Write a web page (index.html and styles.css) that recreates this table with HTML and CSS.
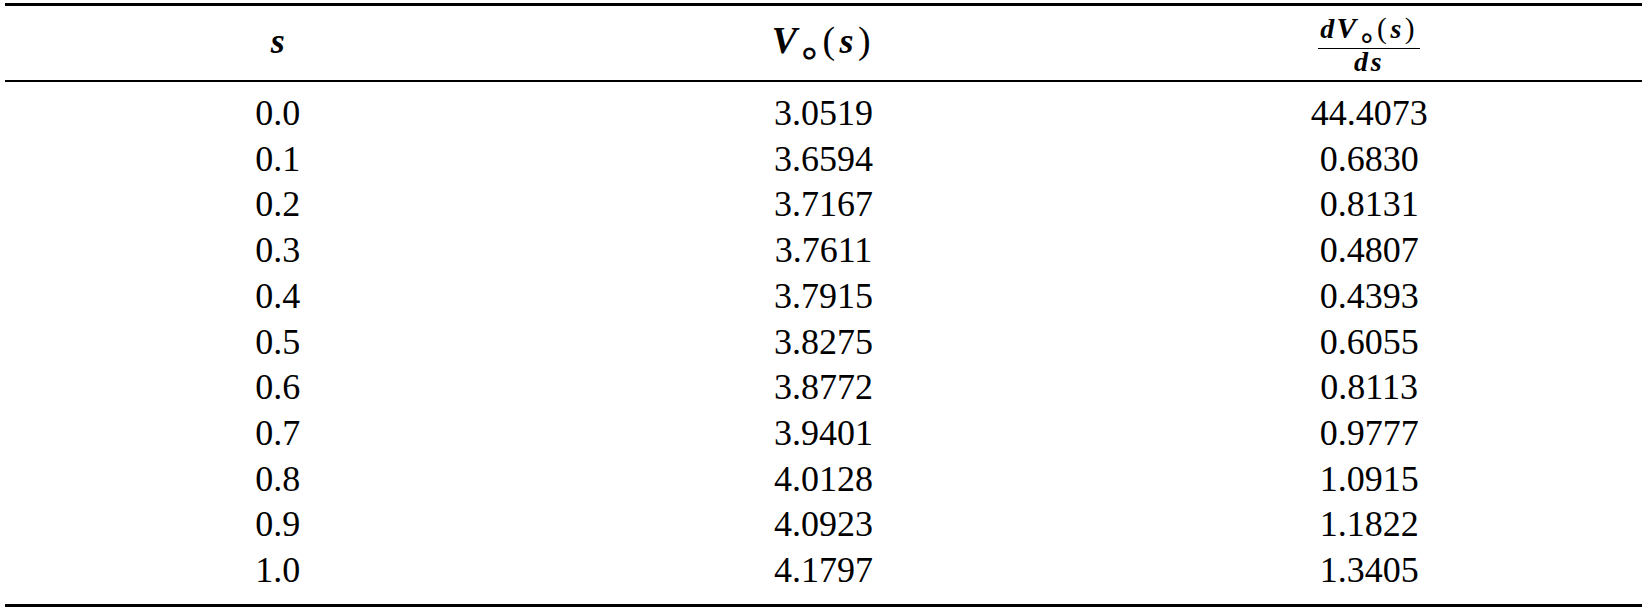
FILE: index.html
```html
<!DOCTYPE html>
<html lang="en">
<head>
    <meta charset="UTF-8">
    <title>V(s) table</title>
    <link rel="stylesheet" href="styles.css">
</head>
<body>
    <table class="tbl">
        <thead>
            <tr>
                <th><i class="m">s</i></th>
                <th><i class="m v">V</i><span class="ring">∘</span><span class="par">(</span><i class="m">s</i><span class="par">)</span></th>
                <th class="fr">
                    <div class="frac">
                        <span class="num"><i class="m">d</i><i class="m v">V</i><span class="ring">∘</span><span class="par">(</span><i class="m">s</i><span class="par">)</span></span>
                        <span class="den"><i class="m">d</i><i class="m">s</i></span>
                    </div>
                </th>
            </tr>
        </thead>
        <tbody>
            <tr><td>0.0</td><td>3.0519</td><td>44.4073</td></tr>
            <tr><td>0.1</td><td>3.6594</td><td>0.6830</td></tr>
            <tr><td>0.2</td><td>3.7167</td><td>0.8131</td></tr>
            <tr><td>0.3</td><td>3.7611</td><td>0.4807</td></tr>
            <tr><td>0.4</td><td>3.7915</td><td>0.4393</td></tr>
            <tr><td>0.5</td><td>3.8275</td><td>0.6055</td></tr>
            <tr><td>0.6</td><td>3.8772</td><td>0.8113</td></tr>
            <tr><td>0.7</td><td>3.9401</td><td>0.9777</td></tr>
            <tr><td>0.8</td><td>4.0128</td><td>1.0915</td></tr>
            <tr><td>0.9</td><td>4.0923</td><td>1.1822</td></tr>
            <tr><td>1.0</td><td>4.1797</td><td>1.3405</td></tr>
        </tbody>
    </table>
</body>
</html>
```

FILE: styles.css
```css
html, body {
    margin: 0;
    background-color: #fff;
}
body {
    padding: 3px 1px 0 5px;
    font-family: "Liberation Serif", "Times New Roman", serif;
    color: #000;
}
.tbl {
    width: 100%;
    border-collapse: separate;
    border-spacing: 0;
    table-layout: fixed;
    border-top: 3px solid #000;
    border-bottom: 3px solid #000;
}
th {
    font-weight: normal;
    font-size: 36px;
    line-height: 40px;
    height: 40px;
    padding: 15px 0 19px;
    border-bottom: 2px solid #000;
    text-align: center;
    vertical-align: top;
}
td {
    font-size: 36px;
    line-height: 45.7px;
    padding: 0;
    text-align: center;
}
tbody tr:first-child td {
    padding-top: 9px;
}
tbody tr:last-child td {
    padding-bottom: 10px;
}
.m {
    font-weight: bold;
    font-style: italic;
    line-height: 0;
}
.v {
    font-size: 1.05em;
}
.ring {
    font-family: "DejaVu Sans", sans-serif;
    font-size: 1.1em;
    line-height: 0;
    vertical-align: -0.34em;
    margin: 0 -0.1em 0 0;
}
.par {
    font-size: 1.05em;
    line-height: 0;
    margin: 0 0.12em;
}
th.fr {
    height: 64px;
    padding: 10px 0 0;
}
.frac {
    display: flex;
    flex-direction: column;
    align-items: center;
    font-size: 28px;
    line-height: 26px;
}
.num {
    padding: 0 2px 6px;
    border-bottom: 1.5px solid #000;
}
.num .v {
    margin-left: 0.08em;
}
.num .ring {
    margin-left: 0.04em;
}
.den {
    letter-spacing: 0.1em;
}
```
